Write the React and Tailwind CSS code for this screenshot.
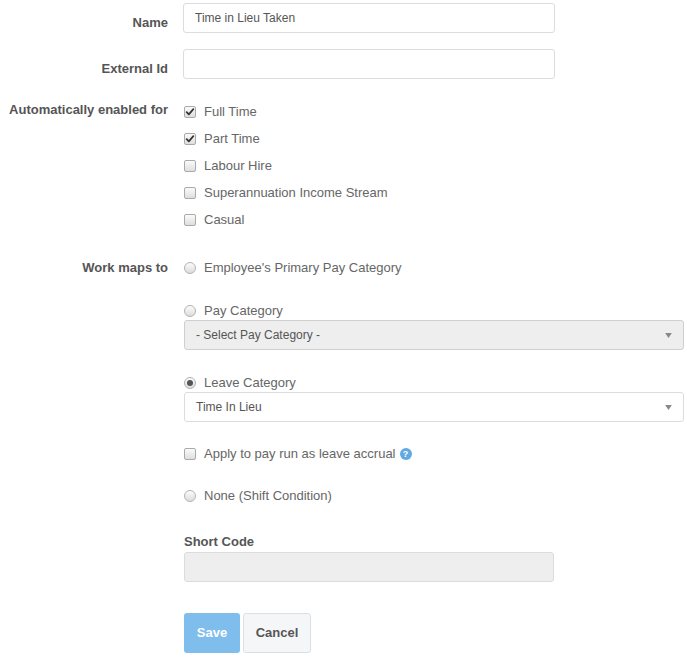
import React from 'react';

const font = "font-['Liberation_Sans',Arial,sans-serif]";

const Checkbox = ({ checked }) => (
    <span className='relative flex h-[12px] w-[12px] flex-none items-center justify-center rounded-[2px] border border-[#a9a9a9] bg-gradient-to-b from-[#fbfbfb] to-[#dedede]'>
        {checked && (
            <svg viewBox="0 0 12 12" className='h-[10px] w-[10px]'>
                <path d="M2 6.2 L4.6 8.8 L10 2.6" fill="none" stroke="#333" strokeWidth="2.1" strokeLinecap="round" strokeLinejoin="round" />
            </svg>
        )}
    </span>
)

const Radio = ({ checked }) => (
    <span className='flex h-[12px] w-[12px] flex-none items-center justify-center rounded-full border border-[#b3b3b3] bg-gradient-to-b from-[#fcfcfc] to-[#dcdcdc]'>
        {checked && <span className='h-[6px] w-[6px] rounded-full bg-[#555]' />}
    </span>
)

const Option = ({ children, type = 'checkbox', checked = false }) => (
    <label className='flex h-[18px] items-center gap-[8px] pl-[1px] leading-[18px] text-[#666]'>
        {type === 'radio' ? <Radio checked={checked} /> : <Checkbox checked={checked} />}
        <span>{children}</span>
    </label>
)

const Select = ({ value, disabled }) => (
    <div className={`ml-[1px] flex h-[30px] w-[500px] items-center justify-between rounded-[3px] border px-[11px] text-[12px] text-[#555] ${disabled ? 'border-[#cfcfcf] bg-[#eeeeee]' : 'border-[#d9dde0] bg-white'}`}>
        <span>{value}</span>
        <svg viewBox="0 0 8 6" className='h-[5px] w-[7px]'>
            <path d="M0 0 H8 L4 6 Z" fill="#888" />
        </svg>
    </div>
)

const Row = ({ label, className = '', labelClass = '', children }) => (
    <div className={`flex ${className}`}>
        <div className={`w-[168px] flex-none text-right font-bold leading-[18px] text-[#555] ${labelClass}`}>{label}</div>
        <div className='ml-[15px]'>{children}</div>
    </div>
)

export default function App() {
    return (
        <div className={`${font} min-h-[661px] w-[687px] bg-white pt-[3px] text-[13px]`}>
            <Row label="Name" labelClass='pt-[11px]'>
                <div className='flex h-[30px] w-[372px] items-center rounded-[3px] border border-[#d9dde0] px-[11px] text-[12px] text-[#555]'>
                    Time in Lieu Taken
                </div>
            </Row>

            <Row label="External Id" className='mt-[16px]' labelClass='pt-[11px]'>
                <div className='h-[30px] w-[372px] rounded-[3px] border border-[#d9dde0]' />
            </Row>

            <Row label="Automatically enabled for" className='mt-[22px]'>
                <div className='flex flex-col gap-[9px] pt-[2px]'>
                    <Option checked>Full Time</Option>
                    <Option checked>Part Time</Option>
                    <Option>Labour Hire</Option>
                    <Option>Superannuation Income Stream</Option>
                    <Option>Casual</Option>
                </div>
            </Row>

            <Row label="Work maps to" className='mt-[30px]'>
                <div className='flex flex-col'>
                    <Option type='radio'>Employee's Primary Pay Category</Option>

                    <div className='mt-[25px]'>
                        <Option type='radio'>Pay Category</Option>
                        <Select value="- Select Pay Category -" disabled />
                    </div>

                    <div className='mt-[24px]'>
                        <Option type='radio' checked>Leave Category</Option>
                        <Select value="Time In Lieu" />
                    </div>

                    <div className='mt-[23px]'>
                        <Option>
                            <span className='flex items-center gap-[4px]'>
                                Apply to pay run as leave accrual
                                <span className='flex h-[12px] w-[12px] items-center justify-center rounded-full bg-[#62a9e3] text-[9px] font-bold leading-none text-white'>?</span>
                            </span>
                        </Option>
                    </div>

                    <div className='mt-[24px]'>
                        <Option type='radio'>None (Shift Condition)</Option>
                    </div>

                    <div className='mt-[28px] pl-[1px]'>
                        <div className='font-bold leading-[18px] text-[#555]'>Short Code</div>
                        <div className='mt-[1px] h-[30px] w-[370px] rounded-[3px] border border-[#d9dde0] bg-[#eeeeee]' />
                    </div>

                    <div className='mt-[31px] flex gap-[3px] pl-[1px]'>
                        <button className='h-[40px] w-[56px] rounded-[3px] bg-[#7fbdec] font-bold text-white'>Save</button>
                        <button className='h-[40px] w-[68px] rounded-[3px] border border-[#dcdfe2] bg-[#f5f6f8] font-bold text-[#555]'>Cancel</button>
                    </div>
                </div>
            </Row>
        </div>
    );
}
